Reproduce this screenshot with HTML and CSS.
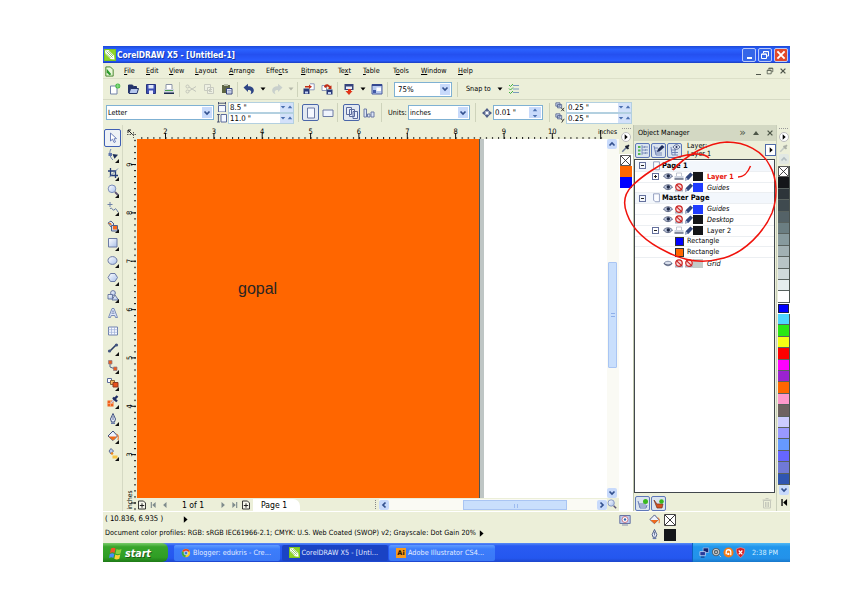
FILE: index.html
```
<!DOCTYPE html>
<html>
  <head>
    <meta charset="utf-8">
    <title>CorelDRAW X5 - [Untitled-1]</title>
    <link rel="stylesheet" href="styles.css">
  </head>
  <body>
    <svg class="defs" width="0" height="0">
      <defs>
        <linearGradient id="lens" x1="0" y1="0" x2="1" y2="1"><stop offset="0" stop-color="#fff"/><stop offset="1" stop-color="#a9c0ea"/></linearGradient>
        <symbol id="i-corel" viewBox="0 0 12 12"><rect width="12" height="12" fill="#7cc520"/><rect x="1" y="1" width="10" height="10" fill="#8ed428"/><path d="M1 1.500l3.500-.5L10 6.500l.5 4-4-.5L1.500 5z" fill="#fff"/><path d="M2.500 2.500l6 6M4.500 2l4.500 5M2 4.500l4.500 4.500" stroke="#5fae22" stroke-width=".7"/></symbol>
        <symbol id="i-doc" viewBox="0 0 12 12"><path d="M2 1h5l3 3v7H2z" fill="#e8f7d8" stroke="#3d7f22"/><path d="M3 3l5 6-2 1-3-3z" fill="#2c9b2c"/></symbol>
        <symbol id="i-new" viewBox="0 0 12 12"><path d="M1.500 3h6.500v8H1.500z" fill="#fff" stroke="#7383a8"/><circle cx="8.800" cy="3" r="2.500" fill="#42b842"/><path d="M8.800 1v4M6.800 3h4" stroke="#b8eeb0" stroke-width=".6"/></symbol>
        <symbol id="i-open" viewBox="0 0 12 12"><path d="M1.500 10V2h4l1 1.500h3V5" fill="#25346b" stroke="#25346b"/><path d="M2 10.500l1.500-5h8l-1.500 5z" fill="#b7c8ee" stroke="#25346b"/></symbol>
        <symbol id="i-save" viewBox="0 0 12 12"><path d="M1.500 1.500h9v9h-9z" fill="#3e50b4" stroke="#28357e"/><path d="M3.500 2h5v3.500h-5z" fill="#dfe7fb"/><path d="M4 7.500h4V11H4z" fill="#eef"/></symbol>
        <symbol id="i-print" viewBox="0 0 12 12"><path d="M3 6V1.500h6V6" fill="#fff" stroke="#8a93a5"/><path d="M1 6h10v4H1z" fill="#cfd5e0"/><path d="M1 9.500h10v1.500H1z" fill="#1d2a50"/><path d="M2 7.500h8" stroke="#4ba04e"/></symbol>
        <symbol id="i-cut" viewBox="0 0 12 12"><g fill="none" stroke="#c3c6bb"><circle cx="2.500" cy="3.500" r="1.500"/><circle cx="2.500" cy="8.500" r="1.500"/><path d="M4 4l7 4.500M4 8l7-4.500"/></g></symbol>
        <symbol id="i-copy" viewBox="0 0 12 12"><g fill="#eef0e3" stroke="#c8cbc0"><path d="M1.500 1.500h6v6h-6zM4.500 4.500h6v6h-6z"/><path d="M6 6.500h3M6 8.500h3"/></g></symbol>
        <symbol id="i-paste" viewBox="0 0 12 12"><path d="M1 2h8v8H1z" fill="#5d6544"/><path d="M3 1h4v2H3z" fill="#b8bda9"/><path d="M5.500 5.500h5.500v5.500H5.500z" fill="#e8edfa" stroke="#35427b"/><path d="M6.500 7.500h3.500M6.500 9h3.500" stroke="#6d7cb0" stroke-width=".6"/></symbol>
        <symbol id="i-undo" viewBox="0 0 12 12"><path d="M0.500 4.500L5 .8v2.400c4 0 6 1.800 5.800 4.500-.2 1.800-1.500 3-3.300 3.600 1.500-2.700.6-4.300-2.500-4.200v2z" fill="#2e4585"/></symbol>
        <symbol id="i-redo" viewBox="0 0 12 12"><path d="M11.500 4.500L7 .8v2.400c-4 0-6 1.800-5.800 4.500.2 1.800 1.500 3 3.300 3.600-1.500-2.700-.6-4.300 2.500-4.200v2z" fill="#c9d0cc"/></symbol>
        <symbol id="i-import" viewBox="0 0 12 12"><path d="M7 .8h4.200v6H7" fill="#fff" stroke="#7684ad" stroke-width=".8"/><path d="M.5 5.500h6v5.500h-6z" fill="#2a3a7b"/><path d="M2 8.500h3v2H2z" fill="#c9d6f4"/><path d="M2 3h4V1.500L9 3.800 6 6V4.500H2z" fill="#c22c16"/></symbol>
        <symbol id="i-export" viewBox="0 0 12 12"><path d="M1 2.500h4.500v5H1z" fill="#fff" stroke="#7684ad" stroke-width=".8"/><path d="M5.500 6.500h6V11.500h-6z" fill="#2a3a7b"/><path d="M7 9h3v2H7z" fill="#c9d6f4"/><path d="M3 4c0-3 4-4 6-1l1.500-.5V6H7l1-1.200C7 3 5.500 3 5 5z" fill="#c22c16"/></symbol>
        <symbol id="i-launch" viewBox="0 0 12 12"><path d="M1.500 1h9v6h-9z" fill="#35427b"/><path d="M3 3.500h6v2.500H3z" fill="#e9eefb"/><path d="M6 12L2.500 8H5V6h3v2h1.500z" fill="#e03418"/></symbol>
        <symbol id="i-welcome" viewBox="0 0 12 12"><path d="M1 1.500h10v9.500H1z" fill="#b8caef" stroke="#4a5da0"/><path d="M1 1h10v2H1z" fill="#33478f"/><path d="M5.500 4.500H10V8H5.500z" fill="#fff"/><path d="M2 7h3v3H2z" fill="#4259a7"/></symbol>
        <symbol id="i-options" viewBox="0 0 12 12"><path d="M5 2.500h6M5 6h6M5 9.500h6" stroke="#7a9cbc"/><path d="M1 2l1.500 1.500L5 1M1 5.500L2.500 7 5 4.500M1 9l1.500 1.500L5 8" fill="none" stroke="#3fb23f"/></symbol>
        <symbol id="i-portrait" viewBox="0 0 12 12"><path d="M2.500 1h7v10h-7z" fill="#f5f8ff" stroke="#6c7ba5"/></symbol>
        <symbol id="i-pagew" viewBox="0 0 10 10"><path d="M1.500 3.500h7V10h-7z" fill="#f5f8ff" stroke="#5b6b9c"/><path d="M1.500 0v2.500M8.500 0v2.500M1.500 1.200h7" stroke="#3a4468" stroke-width=".9"/></symbol>
        <symbol id="i-pageh" viewBox="0 0 10 10"><path d="M4 1.500h5.500v7.500H4z" fill="#f5f8ff" stroke="#5b6b9c"/><path d="M0 1.500h2.800M0 9h2.800M1.400 1.500V9" stroke="#3a4468" stroke-width=".9"/></symbol>
        <symbol id="i-landscape" viewBox="0 0 12 12"><path d="M1 3h10v6.500H1z" fill="#f0f4fd" stroke="#6c7ba5"/></symbol>
        <symbol id="i-pages" viewBox="0 0 14 14"><g fill="#eaf0fc" stroke="#5b6b9c"><path d="M1.500 1.500h5v7h-5zM4.500 3.500h5v7h-5zM8 5.500h4.500v7H8z"/></g></symbol>
        <symbol id="i-curpage" viewBox="0 0 12 12"><g fill="#dbe4f7" stroke="#6c7ba5"><path d="M1 2h2.500v8H1zM4.500 7h2.500v3H4.500zM8 5h3v5H8z"/></g></symbol>
        <symbol id="i-nudge" viewBox="0 0 12 12"><path d="M6 0l3 3.500H3zM6 12l3-3.500H3zM0 6l3.500-3v6zM12 6L8.500 3v6z" fill="#4d5c86"/><path d="M4 4h4v4H4z" fill="#fff" stroke="#8592b5"/></symbol>
        <symbol id="i-dupx" viewBox="0 0 12 12"><path d="M1 1h5v4H1zM3 3h5v4H3z" fill="#c9d4ee" stroke="#56658f"/><path d="M7.500 7l3.500 4M11 7l-3.500 4" stroke="#222"/></symbol>
        <symbol id="i-dupy" viewBox="0 0 12 12"><path d="M1 1h5v4H1zM3 3h5v4H3z" fill="#c9d4ee" stroke="#56658f"/><path d="M7.500 7l1.800 2.200M11 7l-3 4.500" stroke="#222"/></symbol>
        <symbol id="i-pick" viewBox="0 0 12 12"><path d="M3.500 1v8l2-1.800 1.600 3.300 1.400-.7L7 6.800l2.500-.2z" fill="#fff" stroke="#5d73b4" stroke-width=".9"/></symbol>
        <symbol id="i-shape" viewBox="0 0 12 12"><path d="M4 0C2 3 2.500 8 6 11" fill="none" stroke="#6b80b0"/><path d="M1.500 4h3.500v3H1.500z" fill="#5f75ad"/><path d="M5.500 5l5.500.8-3.500 4z" fill="#1c2d58"/></symbol>
        <symbol id="i-crop" viewBox="0 0 12 12"><path d="M3.500 1v7.500H11M1 4h7.500v7" fill="none" stroke="#253d78" stroke-width="1.300"/><path d="M2 10.500l9-9" stroke="#566ea7" stroke-width=".8"/></symbol>
        <symbol id="i-zoom" viewBox="0 0 12 12"><path d="M8 8l3 3" stroke="#5e5573" stroke-width="1.800"/><circle cx="5" cy="4.800" r="3.800" fill="url(#lens)" stroke="#7a8cb9"/></symbol>
        <symbol id="i-freehand" viewBox="0 0 12 12"><path d="M3 0v5M.5 2.500h5" stroke="#6e81a8"/><path d="M3 7c2-3 2 2 4 1s1-3 4 2" fill="none" stroke="#5c729f"/></symbol>
        <symbol id="i-smart" viewBox="0 0 12 12"><path d="M1 3l3-2 3 3-3 3z" fill="#dce4f5" stroke="#51618c"/><path d="M1 3h3l1 3z" fill="#e97a20"/><path d="M4.500 5.500h6v5.500h-6z" fill="#cfdaf1" stroke="#51618c"/><path d="M6 6h4v3.500H6z" fill="#f2681e"/></symbol>
        <symbol id="i-rect" viewBox="0 0 12 12"><path d="M1.500 1.500h8.500v8.500H1.500z" fill="url(#lens)" stroke="#6c7ba5"/></symbol>
        <symbol id="i-ellipse" viewBox="0 0 12 12"><ellipse cx="5.500" cy="5.500" rx="4.500" ry="3.900" fill="url(#lens)" stroke="#6c7ba5"/></symbol>
        <symbol id="i-poly" viewBox="0 0 12 12"><path d="M3.500 1.500h4.500l2.500 4-2.500 4H3.500L1 5.500z" fill="url(#lens)" stroke="#6c7ba5"/></symbol>
        <symbol id="i-basic" viewBox="0 0 12 12"><g fill="url(#lens)" stroke="#5d6d9a" stroke-width=".9"><circle cx="6" cy="3" r="2.400"/><path d="M1 4.500h4.500V9H1z"/><path d="M5 10l3-5 3.500 5z"/></g></symbol>
        <symbol id="i-text" viewBox="0 0 12 12"><path d="M1.500 10.500L5 1.500h2l3.500 9h-2l-.7-2H4.200l-.7 2z" fill="#dfe8fa" stroke="#6076ab" stroke-width=".8"/><path d="M4.800 6.500h2.400L6 3.500z" fill="#fff" stroke="#6076ab" stroke-width=".6"/></symbol>
        <symbol id="i-table" viewBox="0 0 12 12"><path d="M1.500 2h9v8h-9z" fill="#f6f9ff" stroke="#7082ae"/><path d="M4.500 2v8M7.500 2v8M1.500 4.700h9M1.500 7.300h9" stroke="#9fb0d8" stroke-width=".7"/></symbol>
        <symbol id="i-dim" viewBox="0 0 12 12"><path d="M2.500 9.500l7-7" stroke="#2a3c66" stroke-width="1.600"/><circle cx="2.500" cy="9" r="1.600" fill="#42547f"/><circle cx="9.500" cy="3" r="1.600" fill="#42547f"/></symbol>
        <symbol id="i-conn" viewBox="0 0 12 12"><path d="M3 3v4l5 2" fill="none" stroke="#536187"/><path d="M1.500 .5h3.500v3.500H1.500zM6.500 7h3.500V10.500H6.500z" fill="#e85f20" stroke="#8b7a88" stroke-width=".7"/></symbol>
        <symbol id="i-blend" viewBox="0 0 12 12"><path d="M.5 1.500h4v4h-4z" fill="#fff" stroke="#5a6a9c"/><path d="M3.500 3.500h4v4h-4z" fill="#f6bd62" stroke="#8b6438"/><path d="M6 5.500h5v4.500H6z" fill="#e8501a" stroke="#8b3a20"/></symbol>
        <symbol id="i-eyedrop" viewBox="0 0 12 12"><path d="M.5 5.500h6v6h-6z" fill="#f0611c"/><path d="M.5 8.500h6M3.500 5.500v6" stroke="#f9b68a" stroke-width=".7"/><path d="M4 8l3-3" stroke="#c7d0e8" stroke-width="1.500"/><path d="M6.500 5l4-4M6 2.500l4 4" stroke="#1f2e63" stroke-width="2.400"/></symbol>
        <symbol id="i-pen" viewBox="0 0 12 12"><path d="M6 .5l2.500 5.500-1 3h-3l-1-3z" fill="#e8effc" stroke="#42527f"/><path d="M6 3v4" stroke="#42527f" stroke-width=".8"/><path d="M4 9.500h4V11H4z" fill="#6a7dab"/></symbol>
        <symbol id="i-fill" viewBox="0 0 12 12"><path d="M1 6l5-5 4.500 5-4.500 4.500z" fill="#eef3fd" stroke="#3f4f7e"/><path d="M1.500 6.500H10l-4 4z" fill="#ef6a1b"/><path d="M9.500 4c2 .5 2 3 1.500 6" fill="none" stroke="#ef6a1b"/></symbol>
        <symbol id="i-ifill" viewBox="0 0 12 12"><path d="M2 3l2-2.500L6.500 3 4 6z" fill="#b7c8ee" stroke="#3f4f7e" stroke-width=".8"/><circle cx="5" cy="5.500" r="1.300" fill="#ef8a1b"/><path d="M5.500 7.500h5V10.500H5.500z" fill="#f7c544"/></symbol>
        <symbol id="i-drop" viewBox="0 0 12 12"><path d="M1.500 10.500l5-5" stroke="#6b7a98" stroke-width="1.800"/><path d="M6 6l3.500-3.500M5.500 3.500l3.500 3.500" stroke="#18202f" stroke-width="2.200"/></symbol>
        <symbol id="i-x" viewBox="0 0 12 12"><path d="M.5.5h11v11H.5z" fill="#fff" stroke="#444"/><path d="M1 1l10 10M11 1L1 11" stroke="#222" stroke-width=".9"/></symbol>
        <symbol id="i-eye" viewBox="0 0 10 8"><path d="M.5 3.500C3 .5 7 .5 9.500 3.500 7 7 3 7 .5 3.500z" fill="#b9c3da" stroke="#444e6c" stroke-width=".8"/><circle cx="5.300" cy="3.500" r="1.700" fill="#1f2946"/></symbol>
        <symbol id="i-eyeoff" viewBox="0 0 10 8"><path d="M1 4c1-3 7-3 8 0-2 3-6 3-8 0z" fill="#d9dfec" stroke="#6d7995" stroke-width=".8"/><path d="M1 4c3 2 5 2 8 0" fill="none" stroke="#444e6c"/></symbol>
        <symbol id="i-lprint" viewBox="0 0 10 8"><path d="M2.500 3.500V.5h5v3" fill="#fff" stroke="#a7adbb" stroke-width=".7"/><path d="M.5 3.500h9V7h-9z" fill="#cdd3df"/><path d="M.5 6.500h9" stroke="#333d57"/></symbol>
        <symbol id="i-no" viewBox="0 0 10 10"><path d="M.5 7h9v2.500h-9z" fill="#a9b0bf"/><circle cx="5" cy="4.500" r="3.600" fill="#f6dada" stroke="#cb2323" stroke-width="1.400"/><path d="M2.600 2.300l4.800 4.500" stroke="#cb2323" stroke-width="1.300"/></symbol>
        <symbol id="i-pencil" viewBox="0 0 10 10"><path d="M.5 9.500l1-4L6.500 .5l3 2.500L4.500 8.500z" fill="#32477e"/><path d="M.5 9.500l1-3.500 2.500 2z" fill="#b7c0d8"/></symbol>
        <symbol id="i-page" viewBox="0 0 10 12"><path d="M1.500 1h7v9.500h-5l-2-2z" fill="#fbfcff" stroke="#8390b5"/></symbol>
        <symbol id="i-tree" viewBox="0 0 12 12"><path d="M5 1v10M5 3h6M5 6h6M5 9h6M8 2l-1 2M9 5l-1 2M9 8l-1 2" stroke="#697db3" stroke-width=".8"/><path d="M1 2h2.500v2H1zM1 5.500h2.500v2H1zM1 9h2.500v2H1z" fill="#53b84e"/></symbol>
        <symbol id="i-layedit" viewBox="0 0 12 12"><path d="M1 2l2 9h6M1 4h4M2 7h5M3 9h6" fill="none" stroke="#697db3" stroke-width=".9"/><path d="M4 8l1-3 4-4 2.500 2-4.500 4z" fill="#1d2a57"/></symbol>
        <symbol id="i-layview" viewBox="0 0 12 12"><path d="M2 3l1 8h6M2 6h5M3 8.500h6M6 5v6" fill="none" stroke="#697db3" stroke-width=".9"/><path d="M4 3c2-3 5-3 7 0-2 3-5 3-7 0z" fill="#dde5f6" stroke="#3c4b76" stroke-width=".8"/><circle cx="7.500" cy="3" r="1" fill="#1d2a57"/></symbol>
        <symbol id="i-laynew" viewBox="0 0 12 12"><path d="M1 3l2 7h6l1-3M2 6h7M3 8h6" fill="none" stroke="#697db3"/><circle cx="8.500" cy="3.500" r="2.500" fill="#39b81f"/></symbol>
        <symbol id="i-laymaster" viewBox="0 0 12 12"><path d="M1 2l3 4h6l-1 4H4z" fill="#d4531f" stroke="#75311f" stroke-width=".7"/><circle cx="8.500" cy="3.500" r="2.300" fill="#39b81f"/></symbol>
        <symbol id="i-trash" viewBox="0 0 12 12"><path d="M2.500 3.500h7V11h-7zM1.500 3h9M4.500 1.500h3M4.500 5v5M6 5v5M7.500 5v5" fill="none" stroke="#c6c9bc"/></symbol>
        <symbol id="i-proof" viewBox="0 0 12 12"><path d="M.8 1.500h10.400v8H.8z" fill="#b9cdf0" stroke="#6a76a4"/><circle cx="6" cy="5.500" r="3" fill="#fff" stroke="#c35b6b" stroke-width=".8"/><circle cx="6" cy="5.500" r="1.200" fill="#3666b1"/><path d="M3 11h6" stroke="#8690ad"/></symbol>
        <symbol id="i-addpage" viewBox="0 0 10 10"><path d="M1.500 1h5l2 2v6h-7z" fill="#f6f6ec" stroke="#222" stroke-width=".9"/><path d="M5 3.300v4.400M2.800 5.500h4.400" stroke="#222"/></symbol>
        <symbol id="i-right" viewBox="0 0 6 8"><path d="M1 0l4.500 4L1 8z" fill="currentColor"/></symbol>
        <symbol id="i-left" viewBox="0 0 6 8"><path d="M5 0L.5 4 5 8z" fill="currentColor"/></symbol>
        <symbol id="i-first" viewBox="0 0 8 8"><path d="M1 0h1.500v8H1zM7.500 0v8L3 4z" fill="currentColor"/></symbol>
        <symbol id="i-last" viewBox="0 0 8 8"><path d="M5.500 0H7v8H5.500zM.5 0v8L5 4z" fill="currentColor"/></symbol>
        <symbol id="i-down" viewBox="0 0 8 8"><path d="M1.500 2.500L4 5l2.500-2.500" fill="none" stroke="#33518f" stroke-width="1.700"/></symbol>
        <symbol id="i-up" viewBox="0 0 8 8"><path d="M1.500 5.500L4 3l2.500 2.500" fill="none" stroke="#33518f" stroke-width="1.700"/></symbol>
        <symbol id="i-cl" viewBox="0 0 8 8"><path d="M5.500 1.500L3 4l2.500 2.500" fill="none" stroke="#33518f" stroke-width="1.700"/></symbol>
        <symbol id="i-cr" viewBox="0 0 8 8"><path d="M2.500 1.500L5 4 2.500 6.500" fill="none" stroke="#33518f" stroke-width="1.700"/></symbol>
        <symbol id="i-sdown" viewBox="0 0 8 8"><path d="M1 2.500h6L4 6z" fill="#4a6fb0"/></symbol>
        <symbol id="i-sup" viewBox="0 0 8 8"><path d="M1 5.500h6L4 2z" fill="#4a6fb0"/></symbol>
        <symbol id="i-tri" viewBox="0 0 6 6"><path d="M.5 1.500h5L3 4.500z" fill="currentColor"/></symbol>
        <symbol id="i-flag" viewBox="0 0 14 14"><path d="M2 2.500c2-1 3-1 4.500 0L5.500 7C4 6 3 6 1 7z" fill="#f0532a"/><path d="M7.500 3c1.500 1 3 1 5 0l-1 4.500c-2 1-3 1-5 0z" fill="#8fd13c"/><path d="M.8 8c2-1 3-1 4.500 0l-1 4C3 11 2 11 0 12z" fill="#4b8df8"/><path d="M6.300 8.500c1.500 1 3 1 5 0l-1 4.200c-2 1-3 1-5 0z" fill="#fccf35"/></symbol>
        <symbol id="i-chrome" viewBox="0 0 12 12"><circle cx="6" cy="6" r="5" fill="#f6c927"/><path d="M1.500 4A5 5 0 0 1 10.500 4L6 5z" fill="#e23b2b"/><path d="M1.300 4A5 5 0 0 0 5 11l2-4z" fill="#38a744"/><circle cx="6" cy="6" r="2.300" fill="#3c78e0" stroke="#fff" stroke-width=".8"/></symbol>
        <symbol id="i-net" viewBox="0 0 12 12"><path d="M4.500 1h6v5h-6z" fill="#16236f" stroke="#a9c4f0" stroke-width=".8"/><path d="M1 5h6v4.500H1z" fill="#27399a" stroke="#cfe0fa" stroke-width=".8"/><path d="M2 11h4" stroke="#16236f"/></symbol>
        <symbol id="i-vol" viewBox="0 0 12 12"><circle cx="5.500" cy="5.500" r="4.500" fill="#59646c"/><circle cx="5.500" cy="5.500" r="3" fill="none" stroke="#d9dfe3"/><path d="M9 9l2 2" stroke="#ccc"/><circle cx="5.500" cy="5.500" r="1" fill="#ddd"/></symbol>
        <symbol id="i-avast" viewBox="0 0 12 12"><circle cx="6" cy="6" r="5.500" fill="#f47a12"/><path d="M3.500 8V5.500a2.500 2.500 0 0 1 5 0V9" fill="none" stroke="#fff" stroke-width="1.400"/><circle cx="5.800" cy="7.500" r="1.300" fill="#fff"/></symbol>
        <symbol id="i-shield" viewBox="0 0 12 12"><path d="M6 .5l4.500 1.500c.3 4-1 7.500-4.500 9.500C2.500 9.500 1.200 6 1.500 2z" fill="#d81f26" stroke="#f2a8a0" stroke-width=".6"/><path d="M4 3.800L8 8M8 3.800L4 8" stroke="#fff" stroke-width="1.300"/></symbol>
        <symbol id="i-restore" viewBox="0 0 10 10"><path d="M3.500 3V1.500h5V6H7M1.500 4h5v4.500h-5zM3.500 1.700h5M1.500 4.200h5" fill="none" stroke="currentColor"/></symbol>
        <symbol id="i-close" viewBox="0 0 10 10"><path d="M2 2l6 6M8 2L2 8" stroke="currentColor" stroke-width="1.600"/></symbol>
        <pattern id="tickx" x="28.500" y="0" width="6.044" height="15" patternUnits="userSpaceOnUse"><path d="M.5 12v2" stroke="#222"/></pattern>
        <pattern id="ticky" x="0" y="25" width="15" height="6.044" patternUnits="userSpaceOnUse"><path d="M11 .5h2" stroke="#222"/></pattern>
      </defs>
    </svg>

    <div class="window">
      <div class="titlebar">
        <svg class="ic12"><use href="#i-corel"/></svg>
        <span class="caption">CorelDRAW X5 - [Untitled-1]</span>
        <div class="winbtn"><i class="min"></i></div>
        <div class="winbtn"><svg class="ic10"><use href="#i-restore"/></svg></div>
        <div class="winbtn close"><svg class="ic12"><use href="#i-close"/></svg></div>
      </div>

      <div class="menubar">
        <svg class="ic11"><use href="#i-doc"/></svg>
        <span><u>F</u>ile</span><span><u>E</u>dit</span><span><u>V</u>iew</span><span><u>L</u>ayout</span><span><u>A</u>rrange</span><span>Effe<u>c</u>ts</span><span><u>B</u>itmaps</span><span>Te<u>x</u>t</span><span><u>T</u>able</span><span>T<u>o</u>ols</span><span><u>W</u>indow</span><span><u>H</u>elp</span>
        <div class="mdi"><i class="min"></i><svg class="ic8"><use href="#i-restore"/></svg><svg class="ic8"><use href="#i-close"/></svg></div>
      </div>

      <div class="toolbar">
        <svg><use href="#i-new"/></svg><svg><use href="#i-open"/></svg><svg><use href="#i-save"/></svg><svg><use href="#i-print"/></svg>
        <i class="sep"></i>
        <svg><use href="#i-cut"/></svg><svg><use href="#i-copy"/></svg><svg><use href="#i-paste"/></svg>
        <i class="sep"></i>
        <svg><use href="#i-undo"/></svg><svg class="arrow"><use href="#i-tri"/></svg><svg><use href="#i-redo"/></svg><svg class="arrow off"><use href="#i-tri"/></svg>
        <i class="sep"></i>
        <svg><use href="#i-import"/></svg><svg><use href="#i-export"/></svg>
        <i class="sep"></i>
        <svg><use href="#i-launch"/></svg><svg class="arrow"><use href="#i-tri"/></svg><svg><use href="#i-welcome"/></svg>
        <i class="sep"></i>
        <div class="combo zoomlevel"><span>75%</span><b><svg class="ic8"><use href="#i-down"/></svg></b></div>
        <i class="sep"></i>
        <span class="snap">Snap to</span><svg class="arrow"><use href="#i-tri"/></svg><svg><use href="#i-options"/></svg>
      </div>

      <div class="propbar">
        <div class="combo paper"><span>Letter</span><b><svg class="ic8"><use href="#i-down"/></svg></b></div>
        <div class="pair sizes">
          <svg class="ic10"><use href="#i-pagew"/></svg><div class="spin"><span>8.5 "</span><b><svg><use href="#i-sdown"/></svg><svg><use href="#i-sup"/></svg></b></div>
          <svg class="ic10"><use href="#i-pageh"/></svg><div class="spin"><span>11.0 "</span><b><svg><use href="#i-sdown"/></svg><svg><use href="#i-sup"/></svg></b></div>
        </div>
        <i class="sep s1"></i>
        <div class="toggle"><svg class="ic12"><use href="#i-portrait"/></svg></div>
        <svg class="ic12 land"><use href="#i-landscape"/></svg>
        <i class="sep s2"></i>
        <div class="toggle"><svg class="ic14"><use href="#i-pages"/></svg></div>
        <svg class="ic12 cur"><use href="#i-curpage"/></svg>
        <i class="sep s3"></i>
        <span class="units">Units:</span>
        <div class="combo unit"><span>inches</span><b><svg class="ic8"><use href="#i-down"/></svg></b></div>
        <i class="sep s4"></i>
        <svg class="ic10 nudge"><use href="#i-nudge"/></svg>
        <div class="combo step"><span>0.01 "</span><b class="updown"><svg><use href="#i-sup"/></svg><svg><use href="#i-sdown"/></svg></b></div>
        <i class="sep s5"></i>
        <div class="pair dups">
          <svg class="ic10"><use href="#i-dupx"/></svg><div class="spin"><span>0.25 "</span><b><svg><use href="#i-sdown"/></svg><svg><use href="#i-sup"/></svg></b></div>
          <svg class="ic10"><use href="#i-dupy"/></svg><div class="spin"><span>0.25 "</span><b><svg><use href="#i-sdown"/></svg><svg><use href="#i-sup"/></svg></b></div>
        </div>
      </div>

      <div class="main">
        <div class="toolbox">
          <div class="tool active"><svg><use href="#i-pick"/></svg></div>
          <div class="tool fly"><svg><use href="#i-shape"/></svg></div>
          <div class="tool fly"><svg><use href="#i-crop"/></svg></div>
          <div class="tool fly"><svg><use href="#i-zoom"/></svg></div>
          <div class="tool fly"><svg><use href="#i-freehand"/></svg></div>
          <div class="tool fly"><svg><use href="#i-smart"/></svg></div>
          <div class="tool fly"><svg><use href="#i-rect"/></svg></div>
          <div class="tool fly"><svg><use href="#i-ellipse"/></svg></div>
          <div class="tool fly"><svg><use href="#i-poly"/></svg></div>
          <div class="tool fly"><svg><use href="#i-basic"/></svg></div>
          <div class="tool"><svg><use href="#i-text"/></svg></div>
          <div class="tool"><svg><use href="#i-table"/></svg></div>
          <div class="tool fly"><svg><use href="#i-dim"/></svg></div>
          <div class="tool fly"><svg><use href="#i-conn"/></svg></div>
          <div class="tool fly"><svg><use href="#i-blend"/></svg></div>
          <div class="tool fly"><svg><use href="#i-eyedrop"/></svg></div>
          <div class="tool fly"><svg><use href="#i-pen"/></svg></div>
          <div class="tool fly"><svg><use href="#i-fill"/></svg></div>
          <div class="tool fly"><svg><use href="#i-ifill"/></svg></div>
        </div>

        <div class="work">
          <svg class="origin" viewBox="0 0 14 14"><path d="M4 9.500h9M10.500 7v6" stroke="#333" stroke-width=".8" stroke-dasharray="1.500 1"/><path d="M8 5H5v3M5 5l4 4" fill="none" stroke="#222"/></svg>
          <svg class="hruler" viewBox="0 0 482 14">
            <rect width="466" height="14" fill="url(#tickx)"/>
            <path d="M28.500 8v6M76.900 8v6M125.200 8v6M173.600 8v6M221.900 8v6M270.300 8v6M318.600 8v6M367 8v6M415.300 8v6M463.700 5v9" stroke="#111"/>
            <g text-anchor="middle"><text x="28.500" y="8.500">2</text><text x="76.900" y="8.500">3</text><text x="125.200" y="8.500">4</text><text x="173.600" y="8.500">5</text><text x="221.900" y="8.500">6</text><text x="270.300" y="8.500">7</text><text x="318.600" y="8.500">8</text><text x="367" y="8.500">9</text><text x="415.300" y="8.500">10</text><text x="470.500" y="8.500" class="unitname">inches</text></g>
          </svg>
          <svg class="vruler" viewBox="0 0 14 372">
            <rect width="14" height="372" fill="url(#ticky)"/>
            <path d="M8 25.500h5M8 73.900h5M8 122.200h5M8 170.600h5M8 218.900h5M8 267.300h5M8 315.600h5M8 364h5" stroke="#111"/>
            <g text-anchor="middle"><text transform="translate(9 25.500) rotate(-90)">9</text><text transform="translate(9 73.900) rotate(-90)">8</text><text transform="translate(9 122.200) rotate(-90)">7</text><text transform="translate(9 170.600) rotate(-90)">6</text><text transform="translate(9 218.900) rotate(-90)">5</text><text transform="translate(9 267.300) rotate(-90)">4</text><text transform="translate(9 315.600) rotate(-90)">3</text><text transform="translate(8.500 361) rotate(-90)" class="unitname">inches</text></g>
          </svg>
          <div class="canvas"><div class="page"><span>gopal</span></div></div>
          <div class="vscroll">
            <b><svg class="ic8"><use href="#i-up"/></svg></b>
            <div class="track"><div class="thumb"></div></div>
            <b><svg class="ic8"><use href="#i-down"/></svg></b>
          </div>
          <div class="navbar">
            <svg class="ic10"><use href="#i-addpage"/></svg>
            <svg class="nav"><use href="#i-first"/></svg>
            <svg class="nav"><use href="#i-left"/></svg>
            <span class="count">1 of 1</span>
            <svg class="nav"><use href="#i-right"/></svg>
            <svg class="nav"><use href="#i-last"/></svg>
            <svg class="ic10"><use href="#i-addpage"/></svg>
            <span class="tab">Page 1</span>
            <i class="grip"></i>
            <div class="hscroll">
              <b><svg class="ic8"><use href="#i-cl"/></svg></b>
              <div class="track"><div class="thumb"></div></div>
              <b><svg class="ic8"><use href="#i-cr"/></svg></b>
            </div>
          </div>
          <svg class="ic10 corner"><use href="#i-zoom"/></svg>
        </div>

        <div class="docpal">
          <div class="palhead"><i class="dots"></i><div class="round"><svg><use href="#i-right"/></svg></div><svg class="ic10"><use href="#i-drop"/></svg></div>
          <svg class="none"><use href="#i-x"/></svg>
          <div class="chip orange"></div>
          <div class="chip blue"></div>
        </div>

        <div class="docker">
          <div class="dockhead"><span>Object Manager</span><i>»</i><svg class="collapse" viewBox="0 0 6 4"><path d="M0 4l3-4 3 4z" fill="#4d5648"/></svg><svg class="ic8"><use href="#i-close"/></svg></div>
          <div class="docktools">
            <div class="dbtn"><svg class="ic12"><use href="#i-tree"/></svg></div>
            <div class="dbtn"><svg class="ic12"><use href="#i-layedit"/></svg></div>
            <div class="dbtn"><svg class="ic12"><use href="#i-layview"/></svg></div>
            <div class="layer">Layer:<br>Layer 1</div>
            <div class="more"><svg><use href="#i-right"/></svg></div>
          </div>
          <div class="tree">
            <div class="row root"><i class="exp"></i><svg class="pg"><use href="#i-page"/></svg><span>Page 1</span></div>
            <div class="row"><i class="exp plus"></i><svg><use href="#i-eye"/></svg><svg><use href="#i-lprint"/></svg><svg><use href="#i-pencil"/></svg><i class="sw black"></i><span class="current">Layer 1</span></div>
            <div class="row"><i class="gap"></i><svg><use href="#i-eye"/></svg><svg><use href="#i-no"/></svg><svg><use href="#i-pencil"/></svg><i class="sw guide"></i><em>Guides</em></div>
            <div class="row root"><i class="exp"></i><svg class="pg"><use href="#i-page"/></svg><span>Master Page</span></div>
            <div class="row"><i class="gap"></i><svg><use href="#i-eye"/></svg><svg><use href="#i-no"/></svg><svg><use href="#i-pencil"/></svg><i class="sw guide"></i><em>Guides</em></div>
            <div class="row"><i class="gap"></i><svg><use href="#i-eye"/></svg><svg><use href="#i-no"/></svg><svg><use href="#i-pencil"/></svg><i class="sw black"></i><em>Desktop</em></div>
            <div class="row"><i class="exp"></i><svg><use href="#i-eye"/></svg><svg><use href="#i-lprint"/></svg><svg><use href="#i-pencil"/></svg><i class="sw black"></i><span>Layer 2</span></div>
            <div class="row object"><i class="sw blue"></i><span>Rectangle</span></div>
            <div class="row object"><i class="sw orange"></i><span>Rectangle</span></div>
            <div class="row last"><i class="gap"></i><svg><use href="#i-eyeoff"/></svg><svg><use href="#i-no"/></svg><svg><use href="#i-no"/></svg><i class="sw grid"></i><em>Grid</em></div>
          </div>
          <div class="dockfoot">
            <div class="dbtn"><svg class="ic12"><use href="#i-laynew"/></svg></div>
            <div class="dbtn"><svg class="ic12"><use href="#i-laymaster"/></svg></div>
            <svg class="ic12 trash"><use href="#i-trash"/></svg>
          </div>
        </div>

        <div class="palette">
          <div class="palhead"><i class="dots"></i><div class="round"><svg><use href="#i-right"/></svg></div><svg class="ic10 faded"><use href="#i-drop"/></svg></div>
          <b class="faded"><svg class="ic8"><use href="#i-up"/></svg></b>
          <div class="swatches">
            <svg><use href="#i-x"/></svg>
            <i></i><i></i><i></i><i></i><i></i><i></i><i></i><i></i><i></i><i></i><i></i>
            <i class="picked"></i>
            <i></i><i></i><i></i><i></i><i></i><i></i><i></i><i></i><i></i><i></i><i></i><i></i><i></i><i></i><i></i>
          </div>
          <b><svg class="ic8"><use href="#i-down"/></svg></b>
          <svg class="expand"><use href="#i-first"/></svg>
        </div>
      </div>

      <div class="status">
        <div class="info">
          <div><span class="coords">( 10.836, 6.935 )</span><svg><use href="#i-right"/></svg></div>
          <div><span class="profiles">Document color profiles: RGB: sRGB IEC61966-2.1; CMYK: U.S. Web Coated (SWOP) v2; Grayscale: Dot Gain 20%</span><svg><use href="#i-right"/></svg></div>
        </div>
        <svg class="ic12 proof"><use href="#i-proof"/></svg>
        <div class="fills">
          <svg class="ic11"><use href="#i-fill"/></svg><svg class="box"><use href="#i-x"/></svg>
          <svg class="ic11"><use href="#i-pen"/></svg><i class="box"></i>
        </div>
      </div>

      <div class="taskbar">
        <div class="start"><svg class="ic14"><use href="#i-flag"/></svg><span>start</span></div>
        <div class="task"><svg class="ic10"><use href="#i-chrome"/></svg><span>Blogger: edukris - Cre...</span></div>
        <div class="task on"><svg class="ic11"><use href="#i-corel"/></svg><span>CorelDRAW X5 - [Unti...</span></div>
        <div class="task"><i class="ai">Ai</i><span>Adobe Illustrator CS4...</span></div>
        <div class="tray"><svg><use href="#i-net"/></svg><svg><use href="#i-vol"/></svg><svg><use href="#i-avast"/></svg><svg><use href="#i-shield"/></svg><span>2:38 PM</span></div>
      </div>

      <!-- hand-drawn marker over the object manager -->
      <svg class="marker" viewBox="620 136 160 130">
        <path d="M709 158C703 152 688 154 675 158C660 164 642 176 632 186C623 195 623 204 627 214C633 231 648 243 667 252C684 261 703 264 724 258C745 252 764 232 772 213C778 197 777 178 770 166C763 151 745 142 727 142C708 143 686 155 673 170"/>
        <path d="M738 177C745 177 748 172 750.500 166"/>
      </svg>
    </div>
  </body>
</html>
```

FILE: styles.css
```
* {
  box-sizing: border-box;
}

body {
  margin: 0;
  background: #fff;
  font: 7.2px/10px "DejaVu Sans Condensed", "DejaVu Sans", sans-serif;
  font-stretch: condensed;
  color: #000;
}

svg {
  display: block;
  flex: none;
}

i, em {
  flex: none;
}

.defs {
  position: absolute;
}

.ic8 { width: 8px; height: 8px; }
.ic10 { width: 10px; height: 10px; }
.ic11 { width: 11px; height: 11px; }
.ic12 { width: 12px; height: 12px; }
.ic14 { width: 14px; height: 14px; }

.window {
  position: relative;
  display: flex;
  flex-direction: column;
  width: 687px;
  height: 516px;
  margin: 46px 0 0 103px;
  background: #ecefd9;
  white-space: nowrap;
}

/* title */
.titlebar {
  display: flex;
  align-items: center;
  height: 17px;
  padding: 0 2px 0 1px;
  background: linear-gradient(#1c49d8, #2b62ff 20%, #2450f0 50%, #2a5cff 85%, #1b3fc0);
  color: #fff;
}

.caption {
  flex: 1;
  padding-left: 1px;
  font: bold 8.4px/14px "DejaVu Sans Condensed", sans-serif;
  letter-spacing: -0.06px;
  text-shadow: 1px 1px #123aa8;
}

.winbtn {
  display: flex;
  align-items: center;
  justify-content: center;
  width: 14px;
  height: 14px;
  margin-left: 2px;
  border: 1px solid #b9c9fb;
  border-radius: 2px;
  background: #3566e8;
}
  .winbtn.close {
    background: #e2492a;
  }

.min {
  width: 5px;
  height: 2px;
  margin-top: 6px;
  background: currentColor;
}

/* menu */
.menubar {
  display: grid;
  grid-template-columns: 20px 22px 23px 26px 34px 37px 35px 37px 25px 30px 28px 37px 30px 1fr;
  align-items: center;
  height: 16px;
  padding: 1px 0 0 1px;
  border-bottom: 1px solid #dcdfc8;
}

.mdi {
  display: flex;
  justify-content: flex-end;
  align-items: center;
  gap: 5px;
  padding-right: 3px;
  color: #4f554a;
}
  .mdi .min {
    height: 1px;
  }

/* toolbars */
.toolbar {
  display: flex;
  align-items: center;
  height: 21px;
  padding-left: 3px;
  border-bottom: 1px solid #d6dac4;
}
  .toolbar > svg {
    width: 18px;
    height: 12px;
  }
  .toolbar > svg.arrow {
    width: 10px;
    height: 6px;
  }

.arrow.off {
  color: #b4b8aa;
}

.sep {
  width: 1px;
  height: 15px;
  margin: 0 2px 0 1px;
  background: #ced3bb;
}

.combo {
  display: flex;
  height: 15px;
  border: 1px solid #7fb1d3;
  background: #fff;
}
  .combo span {
    flex: 1;
    padding-left: 3px;
    line-height: 14px;
  }
  .combo b {
    display: flex;
    align-items: center;
    justify-content: center;
    width: 10px;
    margin: 1px;
    background: #c8dafb;
  }
  .combo b.updown {
    flex-direction: column;
    width: 12px;
  }
  .updown svg {
    width: 6px;
    height: 6px;
  }

.zoomlevel {
  width: 58px;
  margin: 0 4px 0 4px;
}
  .zoomlevel span {
    font-size: 7.8px;
  }

.snap {
  width: 29px;
  margin-left: 6px;
}

.propbar {
  display: flex;
  align-items: center;
  height: 25px;
  padding-left: 3px;
}
  .propbar .sep {
    height: 19px;
    margin: 0;
  }

.paper {
  width: 108px;
}
  .paper span {
    padding-left: 1px;
  }

.pair {
  display: grid;
  grid-template-columns: 11px 66px;
  margin-left: 3px;
}

.spin {
  display: flex;
  height: 11px;
  border: 1px solid #b3d0e0;
  background: #fff;
}
  .spin span {
    flex: 1;
    padding-left: 1px;
    line-height: 10px;
    font-size: 7.8px;
  }
  .spin b {
    display: flex;
    align-items: center;
    gap: 1px;
    background: #d3e1fa;
  }
  .spin b svg {
    width: 6px;
    height: 6px;
  }

.propbar .s1 { margin: 0 3px 0 4px; }
.propbar .s2 { margin: 0 5px 0 3px; }
.propbar .s3 { margin: 0 6px 0 6px; }
.propbar .s4 { margin: 0 6px 0 5px; }
.propbar .s5 { margin: 0 2px 0 6px; }

.toggle {
  display: flex;
  align-items: center;
  justify-content: center;
  width: 17px;
  height: 17px;
  border: 1px solid #4a66a8;
  border-radius: 2px;
  background: #e3e9f1;
}

.land { margin-left: 3px; }
.cur { margin-left: 3px; }
.units { width: 20px; }
.unit { width: 62px; }
.unit span { padding-left: 1px; }
.step { width: 50px; margin-left: 1px; }
.step span { padding-left: 1px; font-size: 7.8px; }

/* middle */
.main {
  display: grid;
  grid-template-columns: 20px 496px 14px 143px 14px;
  height: 386px;
}

.toolbox {
  display: flex;
  flex-direction: column;
  padding: 4px 0 0 1px;
  border-right: 1px solid #d5d9c3;
}

.tool {
  position: relative;
  display: flex;
  align-items: center;
  justify-content: center;
  width: 17px;
  height: 17.55px;
}
  .tool svg {
    width: 12px;
    height: 12px;
  }
  .tool.active {
    border: 1px solid #3f5fb4;
    border-radius: 2px;
    background: #eef2f6;
  }
  .tool.fly::after {
    content: "";
    position: absolute;
    right: 2px;
    bottom: 1px;
    border: solid transparent;
    border-width: 4px 0 0 4px;
    border-right: 4px solid #111;
    border-left: 0;
  }

.work {
  display: grid;
  grid-template-columns: 14px 470px 12px;
  grid-template-rows: 14px 359px 13px;
}

.origin {
  width: 14px;
  height: 14px;
}

.hruler {
  grid-column: 2 / 4;
  width: 482px;
  height: 14px;
}

.vruler {
  grid-row: 2 / 4;
  grid-column: 1;
  width: 14px;
  height: 372px;
}

.hruler text, .vruler text {
  font-size: 7.5px;
}

.hruler .unitname, .vruler .unitname {
  font-size: 6.6px;
}

.canvas {
  grid-row: 2;
  grid-column: 2;
  background: #fff;
}

.page {
  width: 343px;
  height: 359px;
  padding: 141px 0 0 101px;
  border-right: 1px solid #4d5552;
  background: #ff6600;
  box-shadow: 4px 0 #bfc6c5;
  font: 16px/18px "Liberation Sans", Arial, sans-serif;
  color: #2a2523;
}

.vscroll {
  display: flex;
  flex-direction: column;
  background: #fafaf4;
}
  .vscroll b, .hscroll b, .palette > b {
    display: flex;
    align-items: center;
    justify-content: center;
    width: 10px;
    height: 10px;
    border-radius: 2px;
    background: #c8dafb;
  }
  .vscroll .track {
    flex: 1;
    padding: 113px 1px 0 1px;
  }
  .vscroll .thumb {
    height: 106px;
    width: 9px;
    border: 1px solid #a9c5f3;
    border-radius: 1px;
    background: linear-gradient(#8fb0ea, #8fb0ea) 2px 50px / 4px 1px no-repeat, linear-gradient(#8fb0ea, #8fb0ea) 2px 53px / 4px 1px no-repeat, #c9dffc;
  }

.navbar {
  display: flex;
  align-items: center;
}
  .nav {
    width: 12px;
    height: 6px;
    color: #7e8b8c;
  }

.count {
  width: 46px;
  padding-left: 11px;
  font-size: 8.6px;
}

.tab {
  width: 47px;
  height: 12px;
  margin-left: 2px;
  padding-left: 8px;
  border-radius: 0 7px 0 0;
  background: #fff;
  font-size: 8.6px;
  line-height: 12px;
}

.grip {
  width: 1px;
  height: 9px;
  margin: 0 3px 0 75px;
  border-left: 1px dotted #888;
}

.hscroll {
  display: flex;
  align-items: center;
  width: 228px;
  height: 11px;
  background: #fafaf4;
}
  .hscroll .track {
    flex: 1;
    padding-left: 74px;
  }
  .hscroll .thumb {
    width: 104px;
    height: 10px;
    border: 1px solid #a9c5f3;
    background: linear-gradient(#9dbbf0, #9dbbf0) 50px 3px / 1px 4px no-repeat, linear-gradient(#9dbbf0, #9dbbf0) 53px 3px / 1px 4px no-repeat, #c9dffc;
  }

.corner {
  margin: 1px 0 0;
}

/* palettes */
.docpal {
  background: #fff;
}

.palhead {
  display: flex;
  flex-direction: column;
  align-items: center;
  height: 29px;
  padding-top: 3px;
  background: #ecefd9;
}

.dots {
  width: 9px;
  height: 1px;
  margin-bottom: 3px;
  border-top: 1px dotted #999;
}

.round {
  display: flex;
  align-items: center;
  justify-content: center;
  width: 10px;
  height: 10px;
  margin-bottom: 1px;
  border: 1px solid #bbb;
  border-radius: 50%;
  background: #fff;
}
  .round svg, .more svg {
    width: 4px;
    height: 6px;
  }

.none {
  width: 11px;
  height: 11px;
  margin: 1px 0 0 1px;
}

.chip {
  width: 12px;
  height: 11px;
  margin-left: 1px;
}

.orange { background: #ff6600; }
.blue { background: #0000ff; }
.black { background: #141619; }
.guide { background: #1f3cff; }
.grid { background: #c3cbc8; }

.palette {
  display: flex;
  flex-direction: column;
  align-items: center;
  border-left: 1px solid #c9cfba;
}

.palette > b.faded, .faded {
  opacity: 0.3;
}

.swatches {
  display: grid;
  grid-template-rows: repeat(28, 11.4px);
  width: 12px;
  margin-top: 2px;
  border-right: 1px solid #4b534f;
}
  .swatches svg {
    width: 11px;
    height: 11px;
  }
  .swatches i {
    border-bottom: 1px solid #59625f;
  }
  .swatches i:nth-of-type(1) { background: #141619; }
  .swatches i:nth-of-type(2) { background: #2d353a; }
  .swatches i:nth-of-type(3) { background: #3f4a4f; }
  .swatches i:nth-of-type(4) { background: #546267; }
  .swatches i:nth-of-type(5) { background: #6b7e82; }
  .swatches i:nth-of-type(6) { background: #879a9e; }
  .swatches i:nth-of-type(7) { background: #a1b0b3; }
  .swatches i:nth-of-type(8) { background: #b8c4c6; }
  .swatches i:nth-of-type(9) { background: #d0dadb; }
  .swatches i:nth-of-type(10) { background: #e5edee; }
  .swatches i:nth-of-type(11) { background: #fff; }
  .swatches i:nth-of-type(12) { background: #0000ff; }
  .swatches i:nth-of-type(13) { background: #4dd5ff; }
  .swatches i:nth-of-type(14) { background: #29e714; }
  .swatches i:nth-of-type(15) { background: #f6ff14; }
  .swatches i:nth-of-type(16) { background: #ff0000; }
  .swatches i:nth-of-type(17) { background: #ff00ff; }
  .swatches i:nth-of-type(18) { background: #9b22d1; }
  .swatches i:nth-of-type(19) { background: #ff6600; }
  .swatches i:nth-of-type(20) { background: #ff99cc; }
  .swatches i:nth-of-type(21) { background: #6e6260; }
  .swatches i:nth-of-type(22) { background: #ccccff; }
  .swatches i:nth-of-type(23) { background: #9999ff; }
  .swatches i:nth-of-type(24) { background: #6699ff; }
  .swatches i:nth-of-type(25) { background: #6666ff; }
  .swatches i:nth-of-type(26) { background: #7079d6; }
  .swatches i:nth-of-type(27) { background: #2f55b0; }
  .swatches i.picked {
    margin: 1px 0;
    border: 1px solid #1a1a44;
    outline: 1px solid #fff;
  }

.expand {
  width: 8px;
  height: 7px;
  margin-top: 4px;
}

/* object manager */
.docker {
  display: flex;
  flex-direction: column;
  border-left: 1px solid #c1c8b0;
}

.dockhead {
  display: flex;
  align-items: center;
  height: 16px;
  padding: 0 2px 0 4px;
  background: #d3d8c3;
}
  .dockhead span {
    flex: 1;
  }
  .dockhead i {
    font: 11px/12px "DejaVu Sans", sans-serif;
    color: #4d5648;
  }
  .dockhead svg {
    margin-left: 7px;
    color: #4d5648;
  }

.collapse {
  width: 6px;
  height: 4px;
}

.docktools {
  display: flex;
  align-items: center;
  gap: 1px;
  height: 18px;
  padding-left: 1px;
}

.dbtn {
  display: flex;
  align-items: center;
  justify-content: center;
  width: 15px;
  height: 15px;
  border: 1px solid #5e78b8;
  border-radius: 2px;
  background: #dbe4ef;
}

.layer {
  flex: 1;
  padding-left: 4px;
  line-height: 8.5px;
}

.more {
  display: flex;
  align-items: center;
  justify-content: center;
  width: 11px;
  height: 12px;
  border: 1px solid #4f6ba8;
  background: #fff;
}

.tree {
  width: 141px;
  height: 334px;
  padding-top: 1px;
  border: 1px solid #41474d;
  background: #fff;
}

.row {
  display: flex;
  align-items: center;
  height: 10.8px;
  padding-left: 17px;
  border-bottom: 1px solid #eceff2;
}
  .row > svg {
    width: 10px;
    height: 9px;
    margin-right: 0.5px;
  }
  .row > svg.pg {
    width: 9px;
    height: 10px;
    margin: 0 1px 0 2px;
  }
  .row.root {
    padding-left: 4px;
    background: #f3f7fc;
    font-weight: bold;
    font-size: 7.5px;
  }
  .row.object {
    padding-left: 40px;
  }
  .row.last {
    border-bottom: 0;
  }

.exp {
  width: 7px;
  height: 7px;
  margin-right: 4px;
  border: 1px solid #65719d;
  background: linear-gradient(#222, #222) center / 3px 1px no-repeat;
}
  .exp.plus {
    background: linear-gradient(#222, #222) center / 3px 1px no-repeat, linear-gradient(#222, #222) center / 1px 3px no-repeat;
  }

.gap {
  width: 11px;
}

.sw {
  width: 10px;
  height: 9px;
  margin: 0 4px 0 -1.5px;
}
  .object .sw {
    width: 9px;
    margin: 0 3px 0 0;
    border: 1px solid #333;
  }

.current {
  color: #e8160c;
  font-weight: bold;
}

.dockfoot {
  display: flex;
  gap: 1px;
  padding: 3px 3px 0 1px;
}
  .trash {
    margin: 1px 0 0 auto;
  }

/* status bar */
.status {
  display: flex;
  height: 32px;
  padding-left: 2px;
  border-top: 1px solid #fff;
  background: #ecefd9;
}

.info {
  width: 514px;
}
  .info > div {
    display: flex;
    align-items: center;
    height: 14px;
  }
  .info svg {
    width: 5px;
    height: 7px;
  }

.coords {
  width: 78px;
  font-size: 7.7px;
}

.profiles {
  width: 374px;
  letter-spacing: 0.05px;
}

.proof {
  margin-top: 2px;
}

.fills {
  display: grid;
  grid-template-columns: 15px 12px;
  grid-auto-rows: 15px;
  margin: 2px 0 0 18px;
}

.box {
  width: 12px;
  height: 12px;
}

i.box {
  background: #141619;
}

/* taskbar */
.taskbar {
  display: flex;
  align-items: center;
  height: 19px;
  background: linear-gradient(#5a8cf6, #2a5bf2 15%, #2457ef 80%, #1d46cb);
  color: #fff;
}

.start {
  display: flex;
  align-items: center;
  width: 65px;
  height: 19px;
  margin-right: 6px;
  padding-left: 6px;
  border-radius: 0 6px 6px 0;
  background: linear-gradient(#7acb6b, #38a52b 20%, #2f9e24 75%, #1e7a17);
  font: italic bold 10.6px/16px "DejaVu Sans Condensed", sans-serif;
  text-shadow: 1px 1px #1d5c18;
}
  .start span {
    padding-left: 2px;
  }

.task {
  display: flex;
  align-items: center;
  width: 106px;
  height: 16px;
  margin-right: 1.5px;
  padding-left: 7px;
  border-radius: 2px;
  background: linear-gradient(#5f9bff, #3c7dfb 25%, #3a78f5);
}
  .task span {
    padding-left: 2px;
    color: #e4ecff;
    letter-spacing: 0.06px;
  }
  .task.on {
    background: #1a43c4;
  }

.ai {
  width: 10px;
  height: 10px;
  background: #f79a1c;
  color: #2a1500;
  font: bold 6.5px/10px "DejaVu Sans", sans-serif;
  text-align: center;
}

.tray {
  display: flex;
  align-items: center;
  width: 98px;
  height: 19px;
  margin-left: auto;
  padding-left: 6px;
  border-left: 1px solid #0d5fc0;
  background: linear-gradient(#4fb8f5, #2196ec 20%, #2392ea 80%, #1878cb);
}
  .tray svg {
    width: 11px;
    height: 11px;
    margin-right: 1px;
  }
  .tray span {
    padding-left: 5px;
    color: #d9efff;
  }

.marker {
  position: absolute;
  left: 517px;
  top: 90px;
  width: 160px;
  height: 130px;
  fill: none;
  stroke: #f0130c;
  stroke-width: 1.5;
}
```
